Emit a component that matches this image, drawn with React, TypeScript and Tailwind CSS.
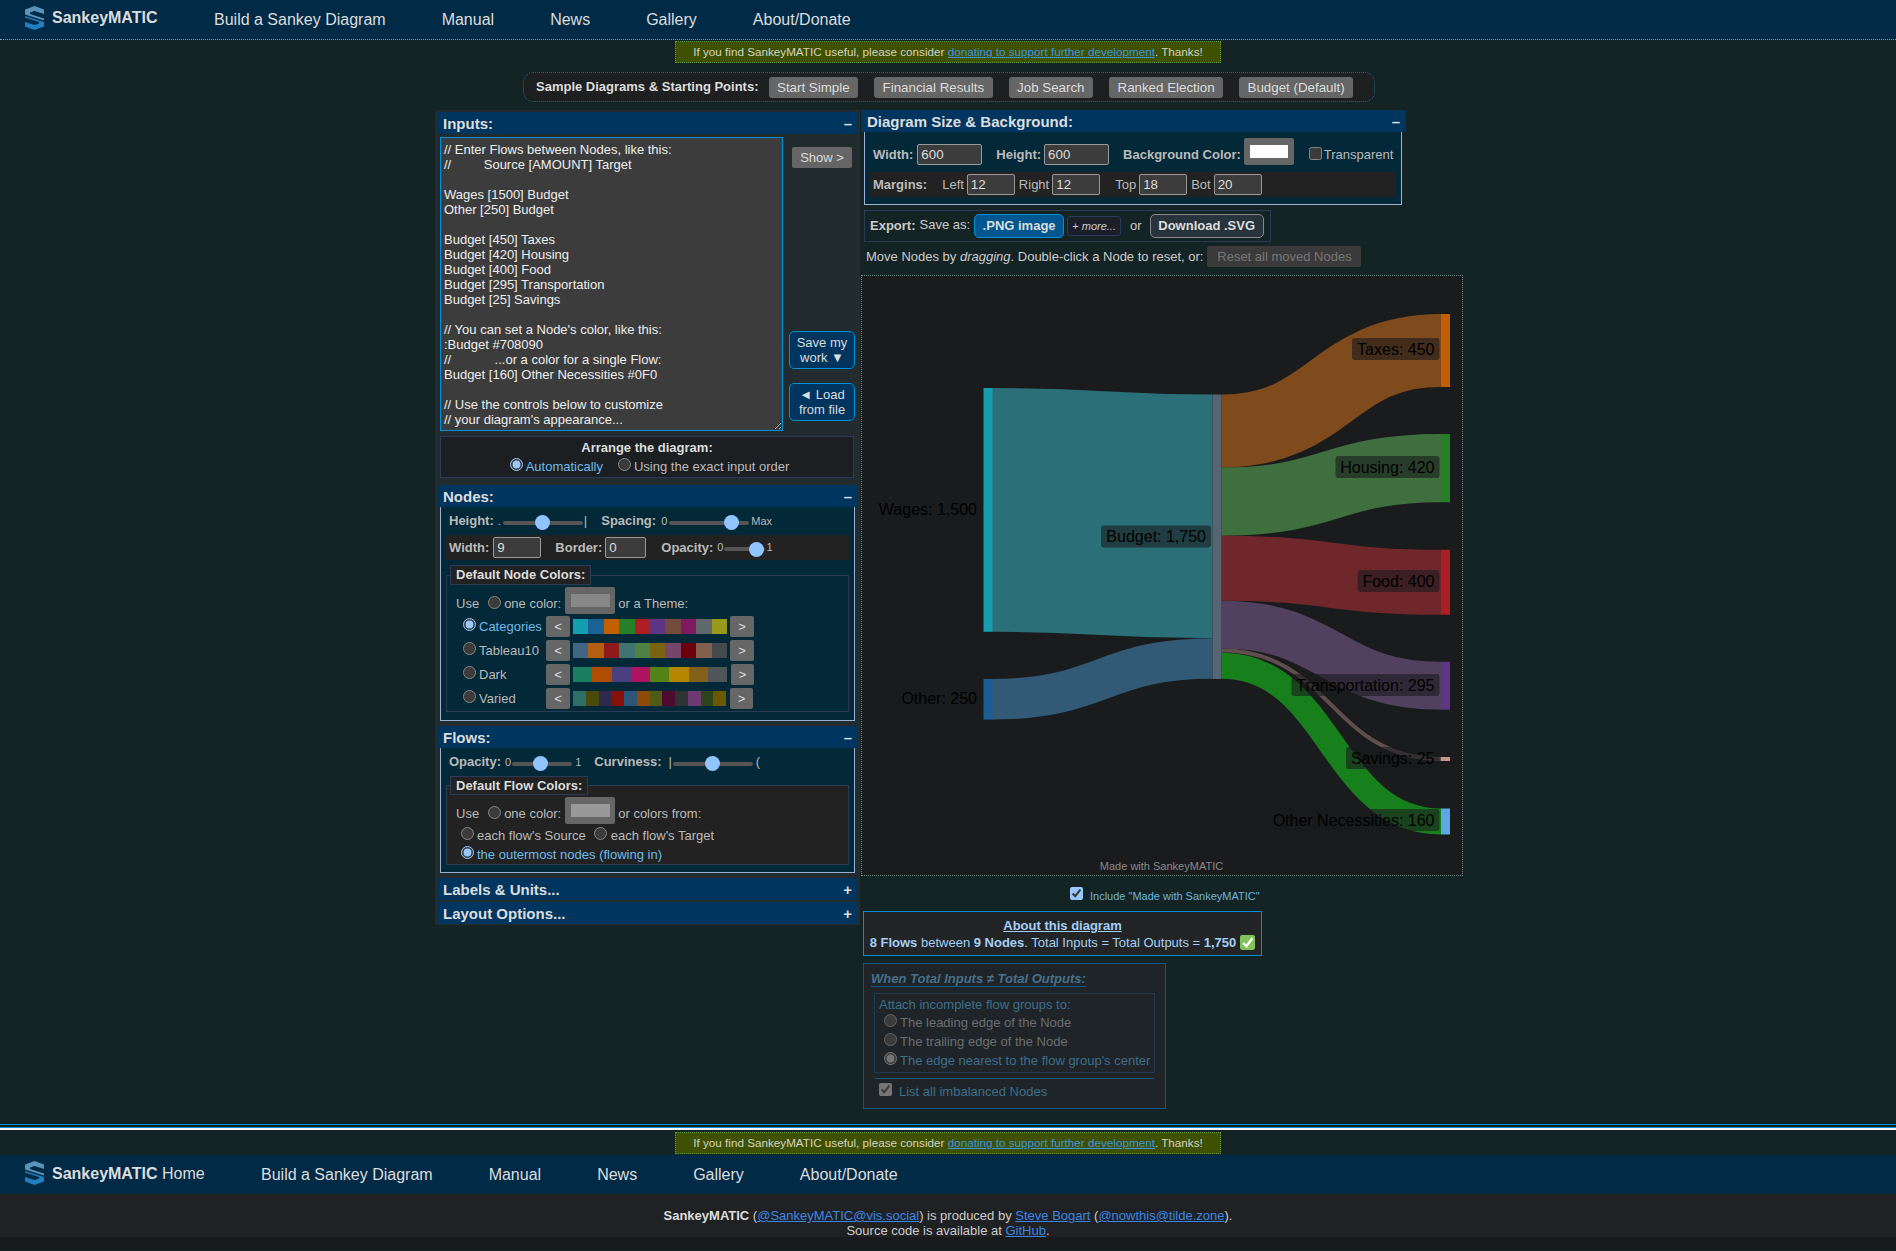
import React from "react";

const flowsData: [number, number, number, number, number, string][] = [
  [130, 350.5, 112, 118.5, 243.75, "#2b7078"],
  [130, 350.5, 403, 362.25, 40.6, "#325975"],
  [359.5, 579, 118.5, 38, 73, "#7f4a1c"],
  [359.5, 579, 191.5, 158, 68.2, "#3f6e3f"],
  [359.5, 579, 259.7, 273.8, 65, "#6f272b"],
  [359.5, 579, 376.8, 532.5, 26, "#17801d"],
  [359.5, 579, 324.7, 385.8, 47.9, "#52405f"],
  [359.5, 579, 372.6, 481, 4, "#5f4e4c"],
];

const nodesData: [number, number, number, string][] = [
  [121.5, 112, 243.75, "#149eb0"],
  [121.5, 403, 40.6, "#1b5e96"],
  [350.5, 118.5, 284.5, "#566573"],
  [579, 38, 73, "#c25e05"],
  [579, 158, 68.2, "#258025"],
  [579, 273.8, 65, "#ab1f24"],
  [579, 385.8, 47.9, "#5f3585"],
  [579, 481, 4, "#c8938a"],
  [579, 532.5, 26, "#5aa9e6"],
];

const labelsData: [string, number, number, number][] = [
  ["Wages: 1,500", 115, 233.5, 0],
  ["Other: 250", 115, 422.5, 0],
  ["Budget: 1,750", 344, 260.5, 239],
  ["Taxes: 450", 572.5, 73, 490],
  ["Housing: 420", 572.5, 191, 473.5],
  ["Food: 400", 572.5, 305, 495.7],
  ["Transportation: 295", 572.5, 409, 429.5],
  ["Savings: 25", 572.5, 482, 484],
  ["Other Necessities: 160", 572.5, 544, 406],
];

function Logo() {
  return (
    <svg width="19" height="24" viewBox="0 0 19 24" className="shrink-0">
      <path d="M0 3.5 L9.5 0 L19 3.5 V8 L9.5 5 L5 6.5 V8 L19 12.5 V14.5 L0 8.5 Z" fill="#5a93b8" />
      <path d="M0 10 L19 16 V20.5 L9.5 24 L0 20.5 V16 L9.5 19 L14 17.5 V16 L0 11.5 Z" fill="#1f7fbf" />
    </svg>
  );
}

function Nav({ home }: { home?: boolean }) {
  return (
    <div className={home ? "h-[39px] bg-[#012a47] flex text-[16px] text-[#dddddd]" : "h-[39px] border-b border-dotted border-[#999999] box-content bg-[#012a47] flex text-[16px] text-[#dddddd]"}>
      <div className="ml-[25px] mt-[6px]"><Logo /></div>
      <div className={home ? "ml-[8px] mt-[9px] h-[20px] leading-[20px] font-bold w-[104px] whitespace-nowrap" : "ml-[8px] mt-[8px] h-[20px] leading-[20px] font-bold w-[104px] whitespace-nowrap"}>
        SankeyMATIC{home ? <span className="font-normal"> Home</span> : null}
      </div>
      <div className={home ? "ml-[105px] mt-[10px] leading-[20px] flex" : "ml-[58px] mt-[10px] leading-[20px] flex"}>
        <span>Build a Sankey Diagram</span>
        <span className="ml-[56px]">Manual</span>
        <span className="ml-[56px]">News</span>
        <span className="ml-[56px]">Gallery</span>
        <span className="ml-[56px]">About/Donate</span>
      </div>
    </div>
  );
}

function Notice() {
  return (
    <div className="ml-[675px] w-[546px] h-[22px] bg-[#3f5000] border border-dotted border-[#5d9a3a] text-[11.7px] leading-[20px] text-[#d4d4c8] text-center whitespace-nowrap">
      If you find SankeyMATIC useful, please consider <a className="underline text-[#3b96e0]">donating to support further development</a>. Thanks!
    </div>
  );
}

function SectionHead({ title, sign }: { title: string; sign: string }) {
  return (
    <div className="h-[22px] bg-[#00355f] flex items-center justify-between px-[6px] pt-[2px] text-[15px] font-bold text-[#dddddd]">
      <span>{title}</span>
      <span>{sign}</span>
    </div>
  );
}

function Slider({ w, pos, cls }: { w: number; pos: number; cls: string }) {
  return (
    <div className={"relative mt-[3px] h-[4px] rounded-[2px] bg-[#555555] " + cls} style={{ width: w }}>
      <div className="absolute -top-[5.5px] w-[15px] h-[15px] rounded-full bg-[#90c5ff]" style={{ left: pos - 7.5 }} />
    </div>
  );
}

function Field({ w, v, cls }: { w: number; v: string; cls?: string }) {
  return (
    <input
      readOnly
      value={v}
      style={{ width: w }}
      className={"h-[21px] bg-[#3c3c3c] border border-[#999999] rounded-[2px] pl-[3px] text-[13.33px] text-[#dddddd] outline-none " + (cls || "")}
    />
  );
}

function Swatches({ colors, w }: { colors: string[]; w: number }) {
  return (
    <div className="flex h-[15px] ml-[3px]" style={{ width: w }}>
      {colors.map((c, i) => (
        <div key={i} className="flex-1" style={{ background: c }} />
      ))}
    </div>
  );
}

function ThemeRow({ name, checked, first, colors, w, nextCls, nextW }: { name: string; checked?: boolean; first?: boolean; colors: string[]; w: number; nextCls: string; nextW: number }) {
  return (
    <div className={first ? "flex items-center h-[21px] mt-[2px]" : "flex items-center h-[21px] mt-[3px]"}>
      <input type="radio" name="theme" defaultChecked={checked} className="ml-[16px] mb-[4px] w-[13px] h-[13px]" />
      <span className={checked ? "ml-[3px] w-[67px] text-[#6cbcec]" : "ml-[3px] w-[67px]"}>{name}</span>
      <div className="w-[24px] h-[21px] rounded-[2px] bg-[#666666] text-[#dddddd] flex items-center justify-center">&lt;</div>
      <Swatches colors={colors} w={w} />
      <div className={"h-[21px] rounded-[2px] bg-[#666666] text-[#dddddd] flex items-center justify-center " + nextCls} style={{ width: nextW }}>&gt;</div>
    </div>
  );
}

function Sample({ t, ml }: { t: string; ml: string }) {
  return <div className={"h-[21px] leading-[21px] px-[8.5px] rounded-[3px] bg-[#666666] text-[#dddddd] text-[13.33px] whitespace-nowrap " + ml}>{t}</div>;
}

const inputText = `// Enter Flows between Nodes, like this:
//         Source [AMOUNT] Target

Wages [1500] Budget
Other [250] Budget

Budget [450] Taxes
Budget [420] Housing
Budget [400] Food
Budget [295] Transportation
Budget [25] Savings

// You can set a Node's color, like this:
:Budget #708090
//            ...or a color for a single Flow:
Budget [160] Other Necessities #0F0

// Use the controls below to customize
// your diagram's appearance...`;

function Chart() {
  return (
    <div className="mt-[8px] w-[602px] h-[601px] border border-dotted border-[#6f8a8a] bg-[#191b1d]">
      <svg width="600" height="599" viewBox="0 0 600 599" className="block">
        {flowsData.map(([x0, x1, y0, y1, h, c], i) => {
          const m = (x0 + x1) / 2;
          const a = y0 + h / 2;
          const b = y1 + h / 2;
          return <path key={i} fill="none" stroke={c} strokeWidth={h} d={`M${x0} ${a} C${m} ${a} ${m} ${b} ${x1} ${b}`} />;
        })}
        {nodesData.map(([x, y, h, c], i) => (
          <rect key={i} x={x} y={y} width="9" height={h} fill={c} />
        ))}
        {labelsData.map(([t, x, y, bx], i) =>
          bx ? <rect key={i} x={bx} y={y - 11} width={x + 5 - bx} height="22" rx="3" fill="#191b1d" fillOpacity="0.6" /> : null
        )}
        {labelsData.map(([t, x, y], i) => (
          <text key={i} x={x} y={y + 5.5} textAnchor="end" fontSize="16" fill="#000000">{t}</text>
        ))}
        <text x="299.5" y="594" textAnchor="middle" fontSize="11" fill="#8a8a8a">Made with SankeyMATIC</text>
      </svg>
    </div>
  );
}

function LeftColumn() {
  return (
    <div className="w-[425px] h-[815px] bg-[#222c2e] pt-[2px] px-[2px] text-[13px] text-[#bbbbbb]">
      <SectionHead title="Inputs:" sign="–" />
      <div className="flex mt-[3px] ml-[3px]">
        <textarea
          readOnly
          defaultValue={inputText}
          className="w-[343px] h-[294px] bg-[#3c3c3c] border border-[#0090e0] text-[#eeeeee] text-[13px] leading-[15px] pt-[4px] pl-[3px] overflow-hidden outline-none"
        />
        <div className="ml-[6px] w-[66px] flex flex-col items-center text-[#dddddd] leading-[15px]">
          <div className="mt-[10px] w-[60px] h-[21px] rounded-[2px] bg-[#666666] flex items-center justify-center">Show &gt;</div>
          <div className="mt-[163px] w-[66px] h-[38px] rounded-[5px] border border-[#0090d8] bg-[#00355f] flex items-center justify-center text-center">Save my<br />work ▼</div>
          <div className="mt-[14px] w-[66px] h-[38px] rounded-[5px] border border-[#0090d8] bg-[#00355f] flex items-center justify-center text-center">◄ Load<br />from file</div>
        </div>
      </div>
      <div className="mt-[5px] ml-[3px] w-[414px] h-[42px] bg-[#1c1f21] border border-[#2b3a55] flex flex-col items-center">
        <div className="font-bold text-[#dddddd] leading-[15px] mt-[3px]">Arrange the diagram:</div>
        <div className="flex items-center mt-[2px] ml-[5px]">
          <input type="radio" name="arr" defaultChecked className="mb-[4px] w-[13px] h-[13px]" />
          <span className="ml-[3px] text-[#6cbcec]">Automatically</span>
          <input type="radio" name="arr" className="ml-[15px] mb-[4px] w-[13px] h-[13px]" />
          <span className="ml-[3px]">Using the exact input order</span>
        </div>
      </div>

      <div className="mt-[7px]"><SectionHead title="Nodes:" sign="–" /></div>
      <div className="mx-[3px] h-[214px] bg-[#032838] border-x border-b border-[#9bb0d8]">
        <div className="h-[28px] flex items-center pl-[8px]">
          <b>Height:</b>
          <span className="ml-[4px] text-[11px]">.</span>
          <Slider w={80} pos={40} cls="ml-[2px]" />
          <span className="ml-[1px] text-[13px]">|</span>
          <b className="ml-[14px]">Spacing:</b>
          <span className="ml-[5px] text-[11px]">0</span>
          <Slider w={80} pos={62} cls="ml-[2px]" />
          <span className="ml-[2px] text-[11px]">Max</span>
        </div>
        <div className="mx-[5px] h-[25px] bg-[#222222] flex items-center pl-[3px]">
          <b>Width:</b>
          <Field w={48} v="9" cls="ml-[4px]" />
          <b className="ml-[14px]">Border:</b>
          <Field w={41} v="0" cls="ml-[3px]" />
          <b className="ml-[15px]">Opacity:</b>
          <span className="ml-[4px] text-[11px]">0</span>
          <Slider w={41} pos={32} cls="ml-[1px]" />
          <span className="ml-[1px] text-[11px]">1</span>
        </div>
        <fieldset className="mx-[5px] mt-[5px] border border-[#2b3a55] pb-[2px]">
          <legend className="ml-[3px] h-[20px] leading-[18px] px-[5px] bg-[#222222] border border-[#2b3a55] font-bold text-[#dddddd]">Default Node Colors:</legend>
          <div className="h-[27px] mt-[2px] flex items-center pl-[9px]">
            <span className="mt-[7px]">Use</span>
            <input type="radio" name="nc" className="ml-[9px] mt-[3px] w-[13px] h-[13px]" />
            <span className="ml-[3px] mt-[7px]">one color:</span>
            <div className="ml-[4px] w-[50px] h-[27px] rounded-[2px] bg-[#666666] flex items-center justify-center"><div className="w-[39px] h-[13px] bg-[#888888]" /></div>
            <span className="ml-[3px] mt-[7px]">or a Theme:</span>
          </div>
          <ThemeRow first name="Categories" checked w={154} nextW={24} nextCls="ml-[3px]" colors={["#149fb1", "#1a6296", "#c45f02", "#25802a", "#ad1f23", "#5f3585", "#744a3c", "#7f1a60", "#5f686b", "#98981a"]} />
          <ThemeRow name="Tableau10" w={154} nextW={24} nextCls="ml-[3px]" colors={["#436585", "#b35f10", "#8f1a1c", "#3f7472", "#4e8244", "#7a6310", "#76466a", "#6c000c", "#82604f", "#454a4d"]} />
          <ThemeRow name="Dark" w={154} nextW={23} nextCls="ml-[4px]" colors={["#1b7f5f", "#af4d02", "#4a3f7f", "#ae1362", "#538317", "#b58700", "#83601a", "#4f5559"]} />
          <ThemeRow name="Varied" w={153} nextW={23} nextCls="ml-[4px]" colors={["#2d6e66", "#4a4a0a", "#30294f", "#85110a", "#2c5578", "#8f4a05", "#4f5c16", "#4f0a30", "#2f3335", "#6e3a72", "#2d451c", "#6a5800"]} />
        </fieldset>
      </div>

      <div className="mt-[5px]"><SectionHead title="Flows:" sign="–" /></div>
      <div className="mx-[3px] h-[125px] bg-[#032838] border-x border-b border-[#9bb0d8]">
        <div className="h-[28px] flex items-center pl-[8px]">
          <b>Opacity:</b>
          <span className="ml-[4px] text-[11px]">0</span>
          <Slider w={60} pos={28} cls="ml-[1px]" />
          <span className="ml-[3px] text-[11px]">1</span>
          <b className="ml-[13px]">Curviness:</b>
          <span className="ml-[7px] text-[13px]">|</span>
          <Slider w={80} pos={40} cls="ml-[1px]" />
          <span className="ml-[3px] text-[13px]">(</span>
        </div>
        <fieldset className="mx-[5px] border border-[#2b3a55] bg-[#222222]">
          <legend className="ml-[3px] h-[19px] leading-[17px] px-[5px] bg-[#222222] border border-[#2b3a55] font-bold text-[#dddddd]">Default Flow Colors:</legend>
          <div className="h-[27px] mt-[2px] flex items-center pl-[9px]">
            <span className="mt-[7px]">Use</span>
            <input type="radio" name="fc" className="ml-[9px] mt-[3px] w-[13px] h-[13px]" />
            <span className="ml-[3px] mt-[7px]">one color:</span>
            <div className="ml-[4px] w-[50px] h-[27px] rounded-[2px] bg-[#666666] flex items-center justify-center"><div className="w-[39px] h-[13px] bg-[#999999]" /></div>
            <span className="ml-[3px] mt-[7px]">or colors from:</span>
          </div>
          <div className="h-[19px] mt-[2px] flex items-center pl-[14px]">
            <input type="radio" name="fs" className="mb-[4px] w-[13px] h-[13px]" />
            <span className="ml-[3px]">each flow's Source</span>
            <input type="radio" name="fs" className="ml-[8px] mb-[4px] w-[13px] h-[13px]" />
            <span className="ml-[4px]">each flow's Target</span>
          </div>
          <div className="h-[19px] flex items-center pl-[14px]">
            <input type="radio" name="fs" defaultChecked className="mb-[4px] w-[13px] h-[13px]" />
            <span className="ml-[3px] text-[#6cbcec]">the outermost nodes (flowing in)</span>
          </div>
        </fieldset>
      </div>

      <div className="mt-[5px]"><SectionHead title="Labels & Units..." sign="+" /></div>
      <div className="mt-[2px]"><SectionHead title="Layout Options..." sign="+" /></div>
    </div>
  );
}

function RightColumn() {
  return (
    <div className="ml-[1px] w-[602px] text-[13px] text-[#cccccc]">
      <div className="w-[545px]"><SectionHead title="Diagram Size & Background:" sign="–" /></div>
      <div className="ml-[3px] w-[538px] h-[73px] bg-[#032838] border-x border-b border-[#9bb0d8] text-[#bbbbbb]">
        <div className="h-[33px] flex items-end pl-[8px]">
          <b className="h-[21px] leading-[21px]">Width:</b>
          <Field w={65} v="600" cls="ml-[4px]" />
          <b className="ml-[14px] h-[21px] leading-[21px]">Height:</b>
          <Field w={65} v="600" cls="ml-[3px]" />
          <b className="ml-[14px] h-[21px] leading-[21px]">Background Color:</b>
          <div className="ml-[3px] w-[50px] h-[27px] rounded-[2px] bg-[#666666] flex items-center justify-center"><div className="w-[38px] h-[13px] bg-white" /></div>
          <div className="ml-[15px] h-[21px] flex items-center">
            <input type="checkbox" className="mb-[3px] w-[13px] h-[13px]" />
            <span className="ml-[2px]">Transparent</span>
          </div>
        </div>
        <div className="mx-[5px] mt-[7px] h-[25px] bg-[#222222] flex items-center pl-[3px]">
          <b>Margins:</b>
          <span className="ml-[15px]">Left</span>
          <Field w={48} v="12" cls="ml-[3px]" />
          <span className="ml-[4px]">Right</span>
          <Field w={48} v="12" cls="ml-[3px]" />
          <span className="ml-[15px]">Top</span>
          <Field w={48} v="18" cls="ml-[3px]" />
          <span className="ml-[4px]">Bot</span>
          <Field w={48} v="20" cls="ml-[3px]" />
        </div>
      </div>
      <div className="ml-[3px] mt-[5px] w-[407px] h-[32px] border border-[#2b3a55] flex items-center pl-[5px] text-[#cccccc]">
        <b>Export:</b>
        <span className="ml-[4px] mb-[2px]">Save as:</span>
        <div className="ml-[4px] w-[90px] h-[24px] rounded-[5px] bg-[#00568f] border border-[#0090d8] font-bold text-[#dddddd] flex items-center justify-center">.PNG image</div>
        <div className="ml-[3px] w-[54px] h-[20px] rounded-[3px] bg-[#1a1f2a] border border-[#2b3a55] text-[11px] flex items-center justify-center">+&nbsp;<i>more...</i></div>
        <span className="ml-[9px]">or</span>
        <div className="ml-[8px] w-[114px] h-[24px] rounded-[5px] bg-[#27343c] border border-[#888888] font-bold text-[#dddddd] flex items-center justify-center">Download .SVG</div>
      </div>
      <div className="mt-[4px] h-[21px] flex items-center pl-[5px]">
        <span>Move Nodes by <i>dragging</i>. Double-click a Node to reset, or:</span>
        <div className="ml-[4px] w-[154px] h-[21px] rounded-[2px] bg-[#3a3a3a] text-[#777777] flex items-center justify-center">Reset all moved Nodes</div>
      </div>
      <Chart />
      <div className="mt-[11px] h-[15px] flex items-start pl-[209px]">
        <input type="checkbox" defaultChecked className="w-[13px] h-[13px]" />
        <span className="ml-[7px] mt-[3px] text-[11px] leading-[13px] text-[#6cb4dc] whitespace-nowrap">Include "Made with SankeyMATIC"</span>
      </div>
      <div className="mt-[9px] ml-[2px] w-[399px] h-[45px] bg-[#222426] border border-[#0090d8] text-[#a4d0f6] flex flex-col items-center">
        <b className="underline leading-[15px] mt-[6px]">About this diagram</b>
        <div className="flex items-center leading-[15px] mt-[2px] whitespace-nowrap">
          <span><b>8 Flows</b> between <b>9 Nodes</b>. Total Inputs = Total Outputs = <b>1,750</b></span>
          <svg width="15" height="15" viewBox="0 0 14 14" className="ml-[4px]">
            <rect width="14" height="14" rx="2" fill="#7fc35a" />
            <path d="M3 7.5 L6 10.5 L11.5 3" stroke="#ffffff" strokeWidth="2.2" fill="none" />
          </svg>
        </div>
      </div>
      <div className="mt-[7px] ml-[2px] w-[303px] h-[146px] bg-[#1e2428] border border-[#0a5a80] pl-[7px] pr-[10px] text-[#3f6f8a]">
        <div className="mt-[7px] h-[15px] w-[215px] box-content border-b border-[#0a5a80] font-bold italic text-[#47708a] leading-[15px] whitespace-nowrap">When Total Inputs ≠ Total Outputs:</div>
        <div className="mt-[6px] ml-[3px] w-[281px] h-[80px] border border-[#1f3a4c] pl-[4px] pt-[3px]">
          <div className="leading-[15px]">Attach incomplete flow groups to:</div>
          {["The leading edge of the Node", "The trailing edge of the Node", "The edge nearest to the flow group's center"].map((t, i) => (
            <div key={i} className={i === 0 ? "h-[19px] mt-[1px] flex items-center pl-[5px] whitespace-nowrap" : "h-[19px] flex items-center pl-[5px] whitespace-nowrap"}>
              <input type="radio" disabled defaultChecked={i === 2} name="imb" className="mb-[4px] w-[13px] h-[13px]" />
              <span className={i === 2 ? "ml-[3px] text-[#3f6f8a]" : "ml-[3px] text-[#6b6f70]"}>{t}</span>
            </div>
          ))}
        </div>
        <div className="mt-[5px] ml-[4px] w-[279px] border-t border-[#0a5a80] h-[20px] flex items-center pl-[4px] pt-[6px]">
          <input type="checkbox" disabled defaultChecked className="mb-[4px] w-[13px] h-[13px]" />
          <span className="ml-[7px]">List all imbalanced Nodes</span>
        </div>
      </div>
    </div>
  );
}

export default function App() {
  return (
    <div className="w-[1896px] h-[1251px] overflow-hidden bg-[#142323] [font-family:'Liberation_Sans',Arial,sans-serif] [color-scheme:dark]">
      <Nav />
      <div className="mt-[1px]"><Notice /></div>
      <div className="ml-[523px] mt-[9px] w-[852px] h-[30px] rounded-[10px] bg-[#1d1f21] border border-dotted border-[#1a6a96] flex items-center pl-[12px] text-[13px]">
        <b className="text-[#dddddd] whitespace-nowrap">Sample Diagrams &amp; Starting Points:</b>
        <Sample t="Start Simple" ml="ml-[10px]" />
        <Sample t="Financial Results" ml="ml-[16px]" />
        <Sample t="Job Search" ml="ml-[16px]" />
        <Sample t="Ranked Election" ml="ml-[16px]" />
        <Sample t="Budget (Default)" ml="ml-[16px]" />
      </div>
      <div className="mt-[8px] ml-[435px] flex">
        <LeftColumn />
        <RightColumn />
      </div>
      <div className="mt-[15px] h-[1px] bg-[#0090d8]" />
      <div className="mt-[2px] h-[1px] bg-[#0090d8]" />
      <div className="h-[2px] bg-[#f4f4f4]" />
      <div className="mt-[2px]"><Notice /></div>
      <div className="mt-[1px]"><Nav home /></div>
      <div className="h-[43px] bg-[#1f2123] pt-[14px] text-center text-[13px] leading-[15px] text-[#cccccc]">
        <div><b className="text-[#dddddd]">SankeyMATIC</b> (<a className="underline text-[#3a86e6]">@SankeyMATIC@vis.social</a>) is produced by <a className="underline text-[#3a86e6]">Steve Bogart</a> (<a className="underline text-[#3a86e6]">@nowthis@tilde.zone</a>).</div>
        <div>Source code is available at <a className="underline text-[#3a86e6]">GitHub</a>.</div>
      </div>
      <div className="h-[13px] bg-[#191a1c]" />
    </div>
  );
}
